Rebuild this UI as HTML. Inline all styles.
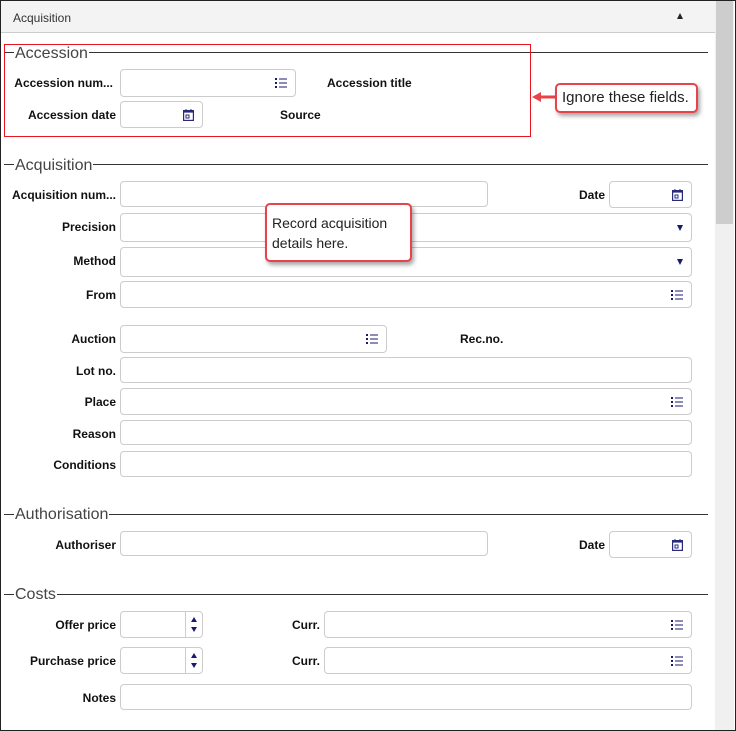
<!DOCTYPE html>
<html><head><style>
*{box-sizing:border-box;margin:0;padding:0}
body{width:736px;height:731px;position:relative;background:#fff;font-family:"Liberation Sans",sans-serif;overflow:hidden}
.a{position:absolute}
.frame{left:0;top:0;width:736px;height:731px;border:1px solid #222}
.hdr{left:1px;top:1px;width:714px;height:32px;background:#f3f3f3;border-bottom:1px solid #ccc;font-size:12px;color:#333;padding:10px 0 0 12px}
.sb{left:715px;top:1px;width:19px;height:729px;background:#f0f0f0}
.th{left:716px;top:1px;width:17px;height:223px;background:#cdcdcd}
.lg{font-size:16px;color:#444;background:#fff;padding:0 1px;line-height:16px}
.ln{height:1px;background:#333;left:4px;width:704px}
.lb{font-size:12px;font-weight:bold;color:#111;text-align:right;line-height:14px}
.in{border:1px solid #ccc;border-radius:4px;background:#fff}
.ic{position:absolute;right:8px;top:50%;transform:translateY(-50%)}
.co{border:2px solid #e8424a;border-radius:5px;background:#fff;box-shadow:2px 3px 4px rgba(0,0,0,.35);font-size:14px;color:#222;padding:0 0 0 5px;line-height:20px}
</style></head><body>
<div class="a hdr">Acquisition</div>
<div class="a" style="left:677px;top:13px;width:0;height:0;border-left:3.5px solid transparent;border-right:3.5px solid transparent;border-bottom:6px solid #222"></div>
<div class="a sb"></div><div class="a th"></div>

<svg width="0" height="0" style="position:absolute"><defs>
<g id="li"><rect x="0" y="0" width="2" height="2" fill="#1a1a6e"/><rect x="0" y="4" width="2" height="2" fill="#1a1a6e"/><rect x="0" y="8" width="2" height="2" fill="#1a1a6e"/><rect x="4" y="0.5" width="8" height="1" fill="#1a1a6e"/><rect x="4" y="4.5" width="8" height="1" fill="#1a1a6e"/><rect x="4" y="8.5" width="8" height="1" fill="#1a1a6e"/></g>
<g id="ca"><rect x="0.6" y="1.6" width="9.8" height="9.8" fill="none" stroke="#2a2a7a" stroke-width="1.2"/><rect x="0.6" y="1.6" width="9.8" height="2" fill="#2a2a7a"/><rect x="2.5" y="0" width="1" height="2" fill="#2a2a7a"/><rect x="7.5" y="0" width="1" height="2" fill="#2a2a7a"/><rect x="3" y="6" width="3" height="3" fill="none" stroke="#2a2a7a" stroke-width="1"/></g>
</defs></svg>

<div class="a ln" style="top:52px"></div>
<div class="a lg" style="left:14px;top:46px">Accession</div>
<div class="a lb" style="left:0;width:113px;top:76px">Accession num...</div>
<div class="a in" style="left:120px;top:69px;width:176px;height:28px"><svg class="ic" width="12" height="10"><use href="#li"/></svg></div>
<div class="a lb" style="left:327px;top:76px">Accession title</div>
<div class="a lb" style="left:0;width:116px;top:108px">Accession date</div>
<div class="a in" style="left:120px;top:101px;width:83px;height:27px"><svg class="ic" width="11" height="12"><use href="#ca"/></svg></div>
<div class="a lb" style="left:280px;top:108px">Source</div>
<div class="a" style="left:4px;top:44px;width:527px;height:93px;border:1px solid #e8141e"></div>
<svg class="a" style="left:530px;top:90px" width="26" height="14"><line x1="10" y1="7" x2="25" y2="7" stroke="#e8424a" stroke-width="3"/><polygon points="2,7 11,2 11,12" fill="#e8424a"/></svg>
<div class="a co" style="left:555px;top:83px;width:143px;height:30px;padding-top:3px;font-size:15px">Ignore these fields.</div>

<div class="a ln" style="top:164px"></div>
<div class="a lg" style="left:14px;top:158px">Acquisition</div>
<div class="a lb" style="left:0;width:116px;top:188px">Acquisition num...</div>
<div class="a in" style="left:120px;top:181px;width:368px;height:26px"></div>
<div class="a lb" style="left:560px;width:45px;top:188px">Date</div>
<div class="a in" style="left:609px;top:181px;width:83px;height:27px"><svg class="ic" width="11" height="12"><use href="#ca"/></svg></div>
<div class="a lb" style="left:0;width:116px;top:220px">Precision</div>
<div class="a in" style="left:120px;top:213px;width:572px;height:29px"><div class="ic" style="width:0;height:0;border-left:3.5px solid transparent;border-right:3.5px solid transparent;border-top:6px solid #1a1a6e"></div></div>
<div class="a lb" style="left:0;width:116px;top:254px">Method</div>
<div class="a in" style="left:120px;top:247px;width:572px;height:30px"><div class="ic" style="width:0;height:0;border-left:3.5px solid transparent;border-right:3.5px solid transparent;border-top:6px solid #1a1a6e"></div></div>
<div class="a lb" style="left:0;width:116px;top:288px">From</div>
<div class="a in" style="left:120px;top:281px;width:572px;height:27px"><svg class="ic" width="12" height="10"><use href="#li"/></svg></div>
<div class="a lb" style="left:0;width:116px;top:332px">Auction</div>
<div class="a in" style="left:120px;top:325px;width:267px;height:28px"><svg class="ic" width="12" height="10"><use href="#li"/></svg></div>
<div class="a lb" style="left:460px;top:332px">Rec.no.</div>
<div class="a lb" style="left:0;width:116px;top:364px">Lot no.</div>
<div class="a in" style="left:120px;top:357px;width:572px;height:26px"></div>
<div class="a lb" style="left:0;width:116px;top:395px">Place</div>
<div class="a in" style="left:120px;top:388px;width:572px;height:27px"><svg class="ic" width="12" height="10"><use href="#li"/></svg></div>
<div class="a lb" style="left:0;width:116px;top:427px">Reason</div>
<div class="a in" style="left:120px;top:420px;width:572px;height:25px"></div>
<div class="a lb" style="left:0;width:116px;top:458px">Conditions</div>
<div class="a in" style="left:120px;top:451px;width:572px;height:26px"></div>
<div class="a co" style="left:265px;top:203px;width:147px;height:59px;padding-top:8px">Record acquisition<br>details here.</div>

<div class="a ln" style="top:514px"></div>
<div class="a lg" style="left:14px;top:507px">Authorisation</div>
<div class="a lb" style="left:0;width:116px;top:538px">Authoriser</div>
<div class="a in" style="left:120px;top:531px;width:368px;height:25px"></div>
<div class="a lb" style="left:560px;width:45px;top:538px">Date</div>
<div class="a in" style="left:609px;top:531px;width:83px;height:27px"><svg class="ic" width="11" height="12"><use href="#ca"/></svg></div>

<div class="a ln" style="top:594px"></div>
<div class="a lg" style="left:14px;top:587px">Costs</div>
<div class="a lb" style="left:0;width:116px;top:618px">Offer price</div>
<div class="a in" style="left:120px;top:611px;width:83px;height:27px"><div class="a" style="left:64px;top:0;width:1px;height:25px;background:#ccc"></div><div class="a" style="left:70px;top:5px;border-left:3px solid transparent;border-right:3px solid transparent;border-bottom:5px solid #1a1a6e"></div><div class="a" style="left:70px;top:15px;border-left:3px solid transparent;border-right:3px solid transparent;border-top:5px solid #1a1a6e"></div></div>
<div class="a lb" style="left:270px;width:50px;top:618px">Curr.</div>
<div class="a in" style="left:324px;top:611px;width:368px;height:27px"><svg class="ic" width="12" height="10"><use href="#li"/></svg></div>
<div class="a lb" style="left:0;width:116px;top:654px">Purchase price</div>
<div class="a in" style="left:120px;top:647px;width:83px;height:27px"><div class="a" style="left:64px;top:0;width:1px;height:25px;background:#ccc"></div><div class="a" style="left:70px;top:5px;border-left:3px solid transparent;border-right:3px solid transparent;border-bottom:5px solid #1a1a6e"></div><div class="a" style="left:70px;top:15px;border-left:3px solid transparent;border-right:3px solid transparent;border-top:5px solid #1a1a6e"></div></div>
<div class="a lb" style="left:270px;width:50px;top:654px">Curr.</div>
<div class="a in" style="left:324px;top:647px;width:368px;height:27px"><svg class="ic" width="12" height="10"><use href="#li"/></svg></div>
<div class="a lb" style="left:0;width:116px;top:691px">Notes</div>
<div class="a in" style="left:120px;top:684px;width:572px;height:26px"></div>

<div class="a frame"></div>
</body></html>
